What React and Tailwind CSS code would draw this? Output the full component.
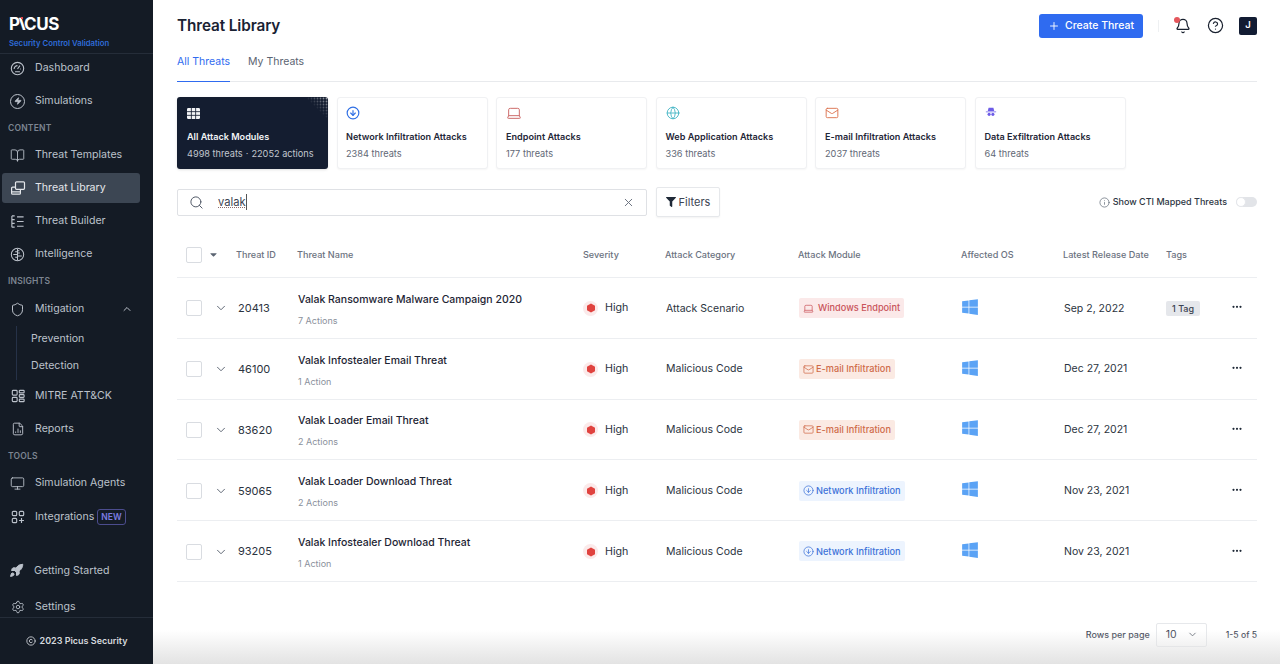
import React from "react";
import {
  BookOpen,
  ChevronDown,
  ChevronUp,
  CircleArrowDown,
  CircleHelp,
  Copyright,
  Ellipsis,
  FileChartColumn,
  Globe,
  Info,
  Laptop,
  Mail,
  Monitor,
  Plus,
  Rocket,
  Search,
  Settings,
  Shield,
  X,
  Zap,
  Bell,
} from "lucide-react";
import { FaWindows, FaFilter, FaCaretDown } from "react-icons/fa";

function GaugeIcon() {
  return (
    <svg viewBox="0 0 16 16" className="w-[15px] h-[15px]" fill="none" stroke="currentColor" strokeWidth="1.2">
      <circle cx="8" cy="8" r="6.6" />
      <path d="M8 8.5 10.6 5M4.4 8.5a3.6 3.6 0 0 1 3.6-3.6M11.6 8.5h-.8M5.4 11.5h5.2" />
    </svg>
  );
}

function BoltIcon() {
  return (
    <span className="relative flex items-center justify-center w-[15px] h-[15px] rounded-full border-[1.3px] border-current">
      <Zap className="w-[8px] h-[8px]" fill="currentColor" />
    </span>
  );
}

function LibraryIcon() {
  return (
    <svg viewBox="0 0 16 16" className="w-[16px] h-[16px]" fill="none" stroke="currentColor" strokeWidth="1.2">
      <rect x="5.5" y="1.8" width="9" height="7.5" rx="1" />
      <path d="M5.5 7.2H2.6a1 1 0 0 0-1 1v5a1 1 0 0 0 1 1h6.8a1 1 0 0 0 1-1v-3.9M1.6 11.8h8.8" />
    </svg>
  );
}

function BuilderIcon() {
  return (
    <svg viewBox="0 0 16 16" className="w-[15px] h-[15px]" fill="none" stroke="currentColor" strokeWidth="1.2">
      <path d="M2 2v12M2 2h3M2 6h3M2 10h3M2 14h3M7.5 3h7M7.5 8h7M7.5 13h7" />
    </svg>
  );
}

function BrainIcon() {
  return (
    <svg viewBox="0 0 16 16" className="w-[15px] h-[15px]" fill="none" stroke="currentColor" strokeWidth="1.1">
      <circle cx="8" cy="8" r="6.6" />
      <path d="M8 2v12M8 5H5.5M8 8H3.5M8 11H5.5M8 6.5h2.5M8 9.5h4.5M8 4h2" />
    </svg>
  );
}

function MitreIcon() {
  return (
    <svg viewBox="0 0 16 16" className="w-[14px] h-[14px]" fill="none" stroke="currentColor" strokeWidth="1.3">
      <rect x="1.5" y="1.5" width="5.5" height="5.5" rx="1" />
      <rect x="1.5" y="9.5" width="5.5" height="5" rx="1" />
      <rect x="9.5" y="1.5" width="5.5" height="3" rx="0.8" />
      <rect x="9.5" y="6.5" width="5.5" height="3" rx="0.8" />
      <rect x="9.5" y="11.5" width="5.5" height="3" rx="0.8" />
    </svg>
  );
}

function IntegrationsIcon() {
  return (
    <svg viewBox="0 0 16 16" className="w-[14px] h-[14px]" fill="none" stroke="currentColor" strokeWidth="1.3">
      <rect x="1.5" y="1.5" width="5" height="5" rx="1.2" />
      <rect x="9.5" y="1.5" width="5" height="5" rx="1.2" />
      <rect x="1.5" y="9.5" width="5" height="5" rx="1.2" />
      <path d="M12 9.2v5.6M9.2 12h5.6" />
    </svg>
  );
}

function TableIcon() {
  return (
    <svg viewBox="0 0 14 14" className="w-[13px] h-[13px]">
      <rect width="14" height="12" y="1" rx="1.5" fill="#f3f4f6" />
      <path d="M0 5h14M0 9h14M4.7 1v12M9.3 1v12" stroke="#141d30" strokeWidth="0.9" />
    </svg>
  );
}

function SpyIcon() {
  return (
    <svg viewBox="0 0 14 14" className="w-[12px] h-[12px]" fill="#6d5ce7">
      <path d="M4.2 1h5.6l1 3.6H3.2zM1 5.2h12v1H1z" />
      <circle cx="4.8" cy="8.6" r="1.8" />
      <circle cx="9.2" cy="8.6" r="1.8" />
    </svg>
  );
}

function Dots() {
  const dots = [];
  for (let r = 0; r < 7; r++) {
    for (let c = 0; c < 7; c++) {
      if (c >= r) dots.push(<circle key={r + "-" + c} cx={c * 3 + 1.5} cy={r * 3 + 1.5} r="0.9" fill="#fff" opacity={0.08 + (c - r) * 0.08} />);
    }
  }
  return (
    <svg viewBox="0 0 21 21" className="absolute top-0 right-0 w-[21px] h-[21px]">
      {dots}
    </svg>
  );
}

function Item({ icon, label, active, className, extra }) {
  return (
    <div className={"flex items-center mx-[2px] rounded-[3px] w-[138px] pl-[7px] " + (active ? "bg-[#3c4653] text-[#e4e7eb] " : "text-[#bcc2cb] ") + (className || "h-[33px]")}>
      <span className="w-[17px] flex justify-center shrink-0">{icon}</span>
      <span className="ml-[9px] text-[10.6px] whitespace-nowrap">{label}</span>
      {extra}
    </div>
  );
}

function Label({ children, className }) {
  return <div className={"flex items-center pl-[8px] text-[8.5px] font-semibold tracking-[0.2px] text-[#7d8591] " + (className || "h-[21px]")}>{children}</div>;
}

function Sidebar() {
  return (
    <aside className="w-[153px] shrink-0 h-full bg-[#141b25] flex flex-col">
      <div className="h-[54px] shrink-0 border-b border-[#252d39] pl-[9px] pt-[15px]">
        <div className="relative text-[17px] leading-[19px] font-bold text-white tracking-[-0.4px]">
          P<span className="inline-block skew-x-[18deg]">I</span>CUS
          <span className="absolute left-[12px] top-[2px] w-[2px] h-[2px] bg-[#e5484d]"></span>
        </div>
        <div className="mt-[4px] text-[7.75px] leading-[10px] font-semibold text-[#2f6bd8] whitespace-nowrap">Security Control Validation</div>
      </div>
      <div className="-mt-[2.5px]">
        <Item icon={<GaugeIcon />} label="Dashboard" />
        <Item icon={<BoltIcon />} label="Simulations" />
        <Label>CONTENT</Label>
        <Item icon={<BookOpen className="w-[15px] h-[15px]" strokeWidth={1.4} />} label="Threat Templates" />
        <Item icon={<LibraryIcon />} label="Threat Library" active className="h-[30px] my-[1.5px]" />
        <Item icon={<BuilderIcon />} label="Threat Builder" />
        <Item icon={<BrainIcon />} label="Intelligence" />
        <Label className="h-[22px]">INSIGHTS</Label>
        <Item
          icon={<Shield className="w-[15px] h-[15px]" strokeWidth={1.6} />}
          label="Mitigation"
          extra={<ChevronUp className="w-[12px] h-[12px] ml-auto mr-[7px]" />}
        />
        <div className="ml-[16px] border-l border-[#263248] pl-[14px] text-[10.6px] text-[#bcc2cb]">
          <div className="h-[27px] flex items-center">Prevention</div>
          <div className="h-[27px] flex items-center">Detection</div>
        </div>
        <Item icon={<MitreIcon />} label="MITRE ATT&CK" />
        <Item icon={<FileChartColumn className="w-[14px] h-[14px]" strokeWidth={1.6} />} label="Reports" />
        <Label>TOOLS</Label>
        <Item icon={<Monitor className="w-[15px] h-[15px]" strokeWidth={1.4} />} label="Simulation Agents" />
        <Item
          icon={<IntegrationsIcon />}
          label="Integrations"
          className="h-[33px] mt-[1px]"
          extra={<span className="ml-[3px] px-[3px] h-[16px] flex items-center rounded-[3px] border border-[#4b4c8e] text-[8.5px] font-semibold text-[#7c7be0]">NEW</span>}
        />
      </div>
      <div className="mt-[21px] h-[33px]">
        <div className="flex items-center h-full pl-[9px] text-[#bcc2cb]">
          <Rocket className="w-[15px] h-[15px]" strokeWidth={1.6} fill="currentColor" />
          <span className="ml-[10px] text-[10.6px]">Getting Started</span>
        </div>
      </div>
      <Item icon={<Settings className="w-[14px] h-[14px]" strokeWidth={1.5} />} label="Settings" className="h-[20px] mt-[10px]" />
      <div className="mt-auto h-[48px] border-t border-[#252d39] flex items-center justify-center gap-[4px] text-[#d5d9de]">
        <Copyright className="w-[10px] h-[10px]" />
        <span className="text-[9px] font-semibold">2023 Picus Security</span>
      </div>
    </aside>
  );
}

const cards = [
  { icon: <CircleArrowDown className="w-[14px] h-[14px] text-[#2f6fe4]" strokeWidth={2} />, title: "Network Infiltration Attacks", sub: "2384 threats", pad: "pl-[8.5px]" },
  { icon: <Laptop className="w-[16px] h-[16px] text-[#c9605f]" strokeWidth={1.4} />, title: "Endpoint Attacks", sub: "177 threats", pad: "pl-[9px]" },
  { icon: <Globe className="w-[14px] h-[14px] text-[#3fb3c4]" strokeWidth={1.5} />, title: "Web Application Attacks", sub: "336 threats", pad: "pl-[9px]" },
  { icon: <Mail className="w-[14px] h-[14px] text-[#dc7350]" strokeWidth={1.6} />, title: "E-mail Infiltration Attacks", sub: "2037 threats", pad: "pl-[9px]" },
  { icon: <SpyIcon />, title: "Data Exfiltration Attacks", sub: "64 threats", pad: "pl-[9px]" },
];

const modules = {
  endpoint: { cls: "bg-[#fbe9e9] text-[#c9545a]", icon: <Laptop className="w-[11px] h-[11px]" strokeWidth={1.6} />, label: "Windows Endpoint", gap: "gap-[4px]" },
  email: { cls: "bg-[#fbeae3] text-[#cf6a49]", icon: <Mail className="w-[11px] h-[11px]" strokeWidth={1.6} />, label: "E-mail Infiltration", gap: "gap-[2px]" },
  network: { cls: "bg-[#edf4fe] text-[#3d72d9]", icon: <CircleArrowDown className="w-[11px] h-[11px]" strokeWidth={1.6} />, label: "Network Infiltration", gap: "gap-[2px]" },
};

const rows = [
  { id: "20413", name: "Valak Ransomware Malware Campaign 2020", actions: "7 Actions", cat: "Attack Scenario", mod: "endpoint", date: "Sep 2, 2022", tag: true },
  { id: "46100", name: "Valak Infostealer Email Threat", actions: "1 Action", cat: "Malicious Code", mod: "email", date: "Dec 27, 2021" },
  { id: "83620", name: "Valak Loader Email Threat", actions: "2 Actions", cat: "Malicious Code", mod: "email", date: "Dec 27, 2021" },
  { id: "59065", name: "Valak Loader Download Threat", actions: "2 Actions", cat: "Malicious Code", mod: "network", date: "Nov 23, 2021" },
  { id: "93205", name: "Valak Infostealer Download Threat", actions: "1 Action", cat: "Malicious Code", mod: "network", date: "Nov 23, 2021" },
];

const gridCols = "grid grid-cols-[60px_60px_286px_82px_133px_163px_102px_103px_1fr] items-center";

function Checkbox() {
  return <span className="block ml-[9px] w-[16px] h-[16px] rounded-[2px] border border-[#d9dce1] bg-white"></span>;
}

function Row({ row }) {
  const m = modules[row.mod];
  return (
    <div className={gridCols + " h-[60.8px] pt-[1px] border-b border-[#eceef1] text-[10.5px] text-[#2b3340]"}>
      <div className="flex items-center">
        <Checkbox />
        <ChevronDown className="ml-[12px] w-[14px] h-[14px] text-[#4b5563]" strokeWidth={1.5} />
      </div>
      <div className="pl-[1px] text-[11px]">{row.id}</div>
      <div className="pl-[1px] mt-[2px]">
        <div className="text-[10.5px] font-medium leading-[16px] text-[#1d2433]">{row.name}</div>
        <div className="mt-[7px] text-[9px] leading-[12px] text-[#8a909b]">{row.actions}</div>
      </div>
      <div className="flex items-center">
        <span className="flex items-center justify-center w-[15px] h-[15px] rounded-full bg-[#fbeaea]">
          <svg viewBox="0 0 12 12" className="w-[10px] h-[10px]">
            <path d="M6 .5 10.8 3.2v5.6L6 11.5 1.2 8.8V3.2z" fill="#e0433f" />
          </svg>
        </span>
        <span className="ml-[7px] text-[10.7px]">High</span>
      </div>
      <div className="pl-[1px]">{row.cat}</div>
      <div>
        <span className={"inline-flex items-center ml-[1px] h-[20px] px-[4px] rounded-[2px] text-[9.2px] font-medium " + m.gap + " " + m.cls}>
          {m.icon}
          {m.label}
        </span>
      </div>
      <div className="-mt-[3px]">
        <FaWindows className="w-[18px] h-[18px] text-[#5ba3f5]" />
      </div>
      <div className="pl-[1px]">{row.date}</div>
      <div className="relative h-full flex items-center">
        {row.tag && <span className="h-[15px] px-[6px] flex items-center rounded-[2px] bg-[#e5e7eb] text-[9px] font-medium text-[#3a4250]">1 Tag</span>}
        <Ellipsis className="absolute left-[65px] top-1/2 -translate-y-[60%] w-[12px] h-[12px] text-[#1f2937]" strokeWidth={2.4} />
      </div>
    </div>
  );
}

export default function App() {
  return (
    <div className="w-[1280px] h-[664px] overflow-hidden flex bg-white font-['Inter',sans-serif] relative">
      <Sidebar />
      <main className="flex-1 pl-[24px] pr-[23px] min-w-0">
        <div className="h-[52px] flex items-center justify-between">
          <h1 className="text-[15.3px] font-semibold text-[#1a2233] tracking-[-0.1px]">Threat Library</h1>
          <div className="flex items-center -mt-[1px]">
            <button className="h-[24px] w-[104px] flex items-center justify-center gap-[5px] rounded-[3px] bg-[#2f6bf0] text-white text-[10.5px] font-medium">
              <Plus className="w-[12px] h-[12px]" strokeWidth={1.8} />
              Create Threat
            </button>
            <span className="ml-[15px] mr-[16px] w-px h-[12px] bg-[#eef0f2]"></span>
            <span className="relative">
              <Bell className="w-[16px] h-[16px] text-[#18202e]" strokeWidth={1.8} />
              <span className="absolute -top-[1px] -left-[1px] w-[6px] h-[6px] rounded-full bg-[#e4575c]"></span>
            </span>
            <CircleHelp className="ml-[16px] w-[17px] h-[17px] text-[#18202e]" strokeWidth={1.7} />
            <span className="ml-[15px] w-[18px] h-[18px] rounded-[2px] bg-[#121c33] text-white text-[9.5px] font-semibold flex items-center justify-center">J</span>
          </div>
        </div>
        <div className="h-[30px] flex border-b border-[#e8eaed] text-[10.5px]">
          <div className="h-[30px] w-[53px] border-b-[1.5px] border-[#2f6bf0] text-[#2f6bf0] whitespace-nowrap pt-[2px]">All Threats</div>
          <div className="ml-[18px] text-[#5b6472] pt-[2px]">My Threats</div>
        </div>
        <div className="mt-[15px] flex gap-[8.5px]">
          <div className="relative w-[151px] h-[72px] rounded-[3px] bg-[#141d30] pl-[10px] pt-[10px] shadow-sm overflow-hidden">
            <Dots />
            <TableIcon />
            <div className="mt-[11px] text-[9.1px] leading-[12px] font-semibold text-[#f1f3f5]">All Attack Modules</div>
            <div className="mt-[5px] text-[9.2px] leading-[12px] text-[#c2c7cf] whitespace-nowrap">
              4998 threats<span className="mx-[3px]">·</span>22052 actions
            </div>
          </div>
          {cards.map((c) => (
            <div key={c.title} className={"w-[151px] h-[72px] rounded-[3px] border border-[#f0f1f3] bg-white pt-[8px] shadow-[0_1px_2px_rgba(0,0,0,0.04)] " + c.pad}>
              <div className="h-[14px] flex items-center">{c.icon}</div>
              <div className="mt-[11px] text-[9.1px] leading-[12px] font-semibold text-[#1f2738] whitespace-nowrap">{c.title}</div>
              <div className="mt-[5px] text-[9.2px] leading-[12px] text-[#5f6775]">{c.sub}</div>
            </div>
          ))}
        </div>
        <div className="mt-[18px] flex items-center">
          <div className="w-[470px] h-[27px] flex items-center rounded-[2px] border border-[#dfe1e5] pl-[11px] pr-[11px]">
            <Search className="w-[15px] h-[15px] text-[#525a68]" strokeWidth={1.6} />
            <span className="ml-[14px] text-[11.2px] text-[#3c4452] underline decoration-dotted decoration-[#8a6a6a] border-r border-[#555]">valak</span>
            <X className="ml-auto w-[13px] h-[13px] text-[#6b7280]" strokeWidth={1.8} />
          </div>
          <button className="ml-[9px] w-[64px] h-[30px] flex items-center justify-center gap-[3px] rounded-[2px] border border-[#e6e8eb] shadow-[0_1px_2px_rgba(0,0,0,0.05)] text-[11px] text-[#3c4452]">
            <FaFilter className="w-[10px] h-[10px] text-[#1f2937]" />
            Filters
          </button>
          <div className="ml-auto flex items-center">
            <Info className="w-[11px] h-[11px] text-[#5b6472]" strokeWidth={1.5} />
            <span className="ml-[3px] text-[9px] font-medium text-[#2d3542]">Show CTI Mapped Threats</span>
            <span className="ml-[9px] relative w-[21px] h-[10px] rounded-full bg-[#e2e4e8]">
              <span className="absolute left-0 top-0 w-[10px] h-[10px] rounded-full bg-white border border-[#e5e7eb]"></span>
            </span>
          </div>
        </div>
        <div className={gridCols + " mt-[22px] h-[39px] pb-[7px] border-b border-[#eceef1] text-[9.1px] font-medium text-[#6b7280]"}>
          <div className="flex items-center">
            <Checkbox />
            <FaCaretDown className="ml-[6px] w-[11px] h-[11px] text-[#5b6472]" />
          </div>
          <div className="-ml-[1px]">Threat ID</div>
          <div>Threat Name</div>
          <div>Severity</div>
          <div>Attack Category</div>
          <div>Attack Module</div>
          <div>Affected OS</div>
          <div>Latest Release Date</div>
          <div>Tags</div>
        </div>
        {rows.map((r) => (
          <Row key={r.id} row={r} />
        ))}
        <div className="mt-[41px] flex items-center justify-end text-[9px] font-medium text-[#3c4452]">
          <span>Rows per page</span>
          <span className="ml-[6px] w-[51px] h-[24px] rounded-[2px] border border-[#e6e8eb] flex items-center justify-between pl-[9px] pr-[8px] text-[10.5px] font-normal">
            10
            <ChevronDown className="w-[11px] h-[11px]" strokeWidth={1.6} />
          </span>
          <span className="ml-[19px] text-[8.6px]">1-5 of 5</span>
        </div>
      </main>
      <div className="absolute left-[153px] right-0 bottom-0 h-[34px] bg-gradient-to-b from-transparent to-[#e3e3e3] pointer-events-none"></div>
    </div>
  );
}
